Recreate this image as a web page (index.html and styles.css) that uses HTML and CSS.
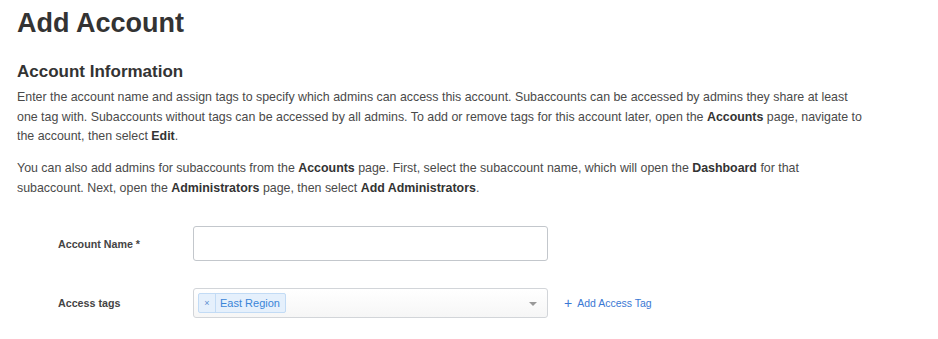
FILE: index.html
```html
<!DOCTYPE html>
<html>
<head>
<meta charset="utf-8">
<link rel="stylesheet" href="styles.css">
</head>
<body>
<main class="page">
  <h1 class="title">Add Account</h1>
  <section class="info">
    <h2 class="section-title">Account Information</h2>
    <p class="desc">Enter the account name and assign tags to specify which admins can access this account. Subaccounts can be accessed by admins they share at least one tag with. Subaccounts without tags can be accessed by all admins. To add or remove tags for this account later, open the <b>Accounts</b> page, navigate to the account, then select <b>Edit</b>.</p>
    <p class="desc">You can also add admins for subaccounts from the <b>Accounts</b> page. First, select the subaccount name, which will open the <b>Dashboard</b> for that subaccount. Next, open the <b>Administrators</b> page, then select <b>Add Administrators</b>.</p>
  </section>
  <form class="form">
    <div class="row row-name">
      <label class="label">Account Name *</label>
      <input class="input" type="text">
    </div>
    <div class="row row-tags">
      <label class="label">Access tags</label>
      <div class="select">
        <span class="chip"><span class="chip-x">×</span><span class="chip-text">East Region</span></span>
        <span class="caret"></span>
      </div>
      <a class="add-tag"><span class="plus">+</span>Add Access Tag</a>
    </div>
  </form>
</main>
</body>
</html>
```

FILE: styles.css
```css
html, body {
  margin: 0;
  padding: 0;
  background: #ffffff;
}
.page {
  padding: 0 0 0 17px;
  font-family: "Liberation Sans", Arial, sans-serif;
  color: #444;
}
.title {
  margin: 0;
  padding-top: 5px;
  font-size: 27px;
  line-height: 36px;
  font-weight: bold;
  color: #333;
}
.info {
  margin-top: 21px;
}
.section-title {
  margin: 0 0 6px 0;
  font-size: 17px;
  line-height: 20px;
  font-weight: bold;
  color: #333;
}
.desc {
  margin: 0 0 12.5px 0;
  width: 849px;
  font-size: 12.4px;
  line-height: 19.5px;
  color: #4a4a4a;
}
.desc b {
  color: #333;
}
.form {
  margin-top: 28px;
}
.row {
  display: flex;
  align-items: center;
}
.label {
  width: 135px;
  padding-left: 41px;
  font-size: 10.7px;
  font-weight: bold;
  color: #444;
}
.input {
  box-sizing: border-box;
  width: 355px;
  height: 35px;
  border: 1px solid #c3c7cc;
  border-radius: 3px;
  margin: 0;
  padding: 0 8px;
  background: #fff;
}
.row-tags {
  margin-top: 27px;
}
.select {
  box-sizing: border-box;
  width: 355px;
  height: 30px;
  border: 1px solid #d2d5d9;
  border-radius: 3px;
  background: linear-gradient(#ffffff, #f6f6f6);
  display: flex;
  align-items: center;
  padding: 0 0 0 4px;
  position: relative;
}
.chip {
  display: flex;
  height: 20px;
  box-sizing: border-box;
  border: 1px solid #c2dbf5;
  border-radius: 2px;
  background: #e5f0fc;
  color: #3a85d8;
  font-size: 11px;
  align-items: center;
}
.chip-x {
  width: 16px;
  text-align: center;
  border-right: 1px solid #c2dbf5;
  height: 100%;
  line-height: 18px;
  font-size: 9px;
  color: #5b8fd0;
}
.chip-text {
  padding: 0 5px 0 4px;
}
.caret {
  position: absolute;
  right: 10px;
  top: 13px;
  width: 0;
  height: 0;
  border-left: 4px solid transparent;
  border-right: 4px solid transparent;
  border-top: 4px solid #999;
}
.add-tag {
  margin-left: 16px;
  color: #3a78d4;
  font-size: 10.5px;
  display: flex;
  align-items: center;
}
.plus {
  font-size: 14px;
  margin-right: 5px;
  line-height: 10px;
}
```
